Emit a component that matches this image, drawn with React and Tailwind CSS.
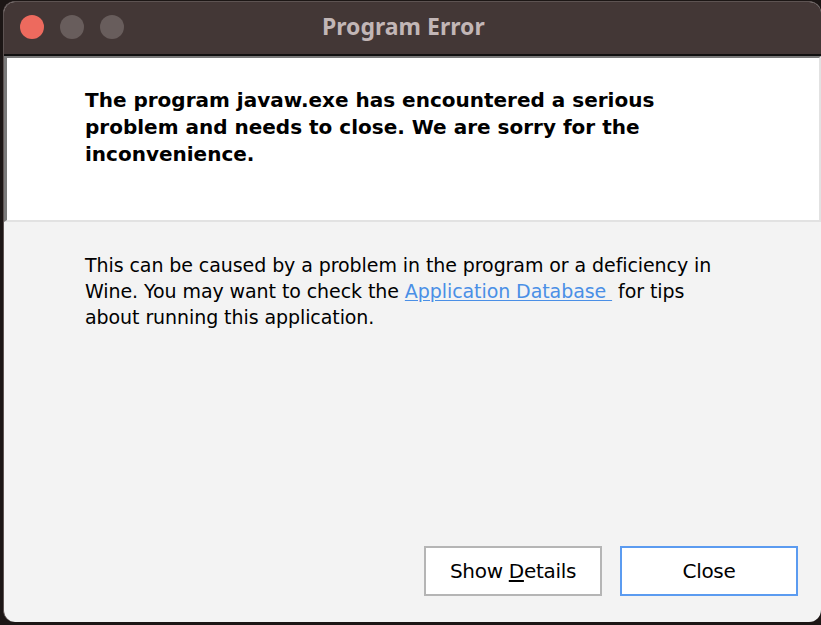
import React from "react";

export default function App() {
  return (
    <div className="w-[821px] h-[625px] bg-[#1c1615] overflow-hidden">
      {/* Window */}
      <div className="ml-[3px] mt-[1px] w-[818px] h-[621px] flex flex-col rounded-t-[12px] rounded-b-[12px] overflow-hidden border-l border-t border-[#5d5352] bg-[#f3f3f3]">
        {/* Title bar */}
        <div className="relative h-[54px] shrink-0 bg-[#433736] flex items-center border-b-2 border-[#111010]">
          <div className="flex items-center gap-[16px] pl-[16px] -mt-[2px]">
            <span className="w-[24px] h-[24px] rounded-full bg-[#ed6a5e]" />
            <span className="w-[24px] h-[24px] rounded-full bg-[#685d5c]" />
            <span className="w-[24px] h-[24px] rounded-full bg-[#685d5c]" />
          </div>
          <div className="absolute left-[318px] top-[9px] text-[23px] font-bold text-[#c2b6b6] font-['Noto_Sans',sans-serif] leading-[30px]">
            Program Error
          </div>
        </div>

        {/* Header panel */}
        <div className="h-[166px] shrink-0 bg-white border-l-[3px] border-t-2 border-[#7a7a7a] border-r-2 border-b-2 border-r-[#e2e2e2] border-b-[#e2e2e2] pl-[78px] pt-[29px]">
          <p className="w-[585px] text-[20px] leading-[27px] font-bold text-black font-['DejaVu_Sans',sans-serif]">
            The program javaw.exe has encountered a serious problem and needs to close. We are sorry for the inconvenience.
          </p>
        </div>

        {/* Body */}
        <div className="flex-1 flex flex-col pl-[81px] pr-[23px] pt-[30px] pb-[26px]">
          <p className="w-[650px] text-[19px] leading-[26px] text-black font-['DejaVu_Sans',sans-serif] tracking-[-0.08px]">
            This can be caused by a problem in the program or a deficiency in Wine. You may want to check the{" "}
            <span className="text-[#4a8fe6] underline underline-offset-2">Application Database&nbsp;</span>{" "}
            for tips about running this application.
          </p>
          <div className="mt-auto flex justify-end gap-[18px]">
            <button className="w-[178px] h-[50px] bg-white border-2 border-[#b5b5b5] text-[20px] text-black font-['DejaVu_Sans',sans-serif] tracking-[-0.3px]">
              Show <span className="underline underline-offset-2">D</span>etails
            </button>
            <button className="w-[178px] h-[50px] bg-white border-2 border-[#5b9bf0] text-[20px] text-black font-['DejaVu_Sans',sans-serif] tracking-[-0.3px]">
              Close
            </button>
          </div>
        </div>
      </div>
    </div>
  );
}
